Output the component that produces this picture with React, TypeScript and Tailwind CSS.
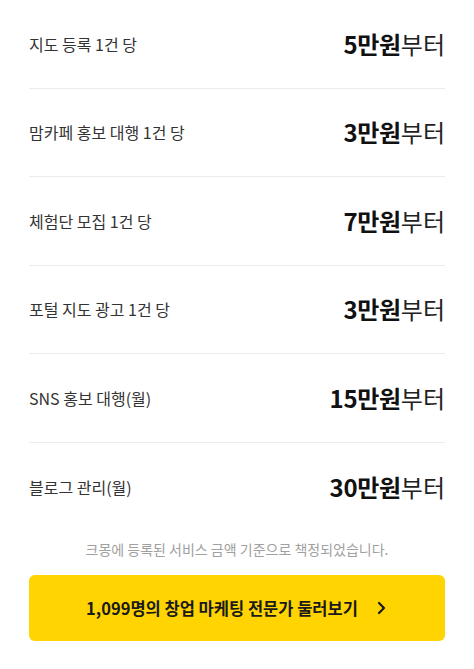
const prices = [
  { label: "지도 등록 1건 당", amount: "5만원" },
  { label: "맘카페 홍보 대행 1건 당", amount: "3만원" },
  { label: "체험단 모집 1건 당", amount: "7만원" },
  { label: "포털 지도 광고 1건 당", amount: "3만원" },
  { label: "SNS 홍보 대행(월)", amount: "15만원" },
  { label: "블로그 관리(월)", amount: "30만원" },
];

export default function App() {
  return (
    <div
      className="min-h-screen bg-white px-[29px]"
      style={{ fontFamily: '"Noto Sans CJK KR", "Noto Sans", sans-serif' }}
    >
      <ul>
        {prices.map((p, i) => (
          <li
            key={p.label}
            className={
              "flex h-[88.5px] items-center justify-between" +
              (i < prices.length - 1 ? " border-b border-[#ebebeb]" : "")
            }
          >
            <span className="text-[16px] text-[#333]">{p.label}</span>
            <span className="text-[24px] leading-none text-[#222]">
              <b className="font-bold tracking-[-0.3px] text-[#111]">{p.amount}</b>부터
            </span>
          </li>
        ))}
      </ul>

      <p className="mt-[8px] text-center text-[14px] text-[#a0a0a0]">
        크몽에 등록된 서비스 금액 기준으로 책정되었습니다.
      </p>

      <button className="mt-[15px] flex h-[66px] w-full items-center justify-center gap-[18px] rounded-[6px] bg-[#ffd400] text-[16.5px] font-bold text-[#1a1a1a]">
        <span>1,099명의 창업 마케팅 전문가 둘러보기</span>
        <svg width="12" height="14" viewBox="0 0 12 14" fill="none">
          <path d="M3 2l5 5-5 5" stroke="#1a1a1a" strokeWidth="2.2" strokeLinecap="round" strokeLinejoin="round" />
        </svg>
      </button>
    </div>
  );
}
